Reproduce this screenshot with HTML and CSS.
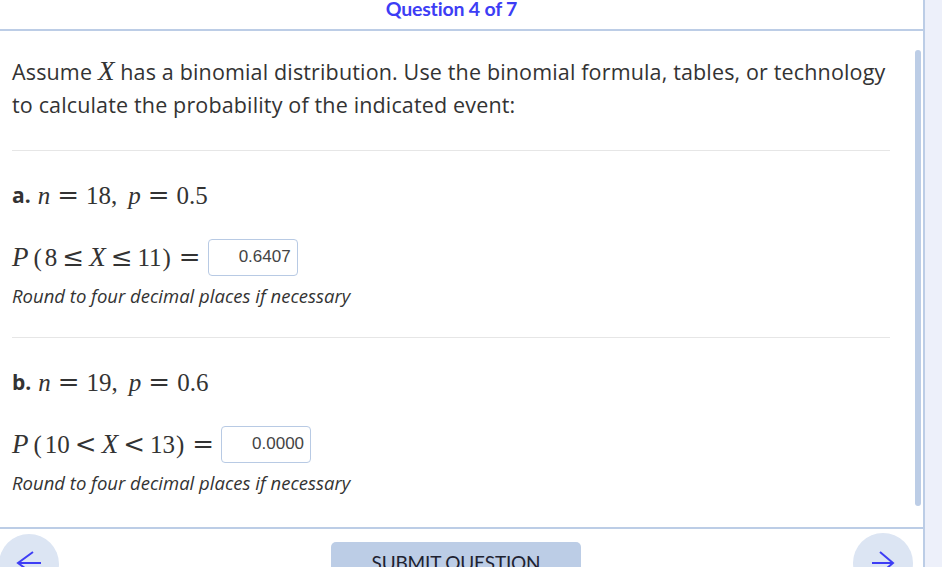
FILE: index.html
```html
<!DOCTYPE html>
<html>
<head>
<meta charset="utf-8">
<link rel="stylesheet" href="styles.css">
</head>
<body>
<div class="app">
  <div class="main">
    <div class="header">Question 4 of 7</div>
    <div class="scroll">
      <div class="content">
        <p class="intro">Assume <span class="mv">X</span> has a binomial distribution. Use the binomial formula, tables, or technology to calculate the probability of the indicated event:</p>

        <div class="part">
          <div class="given"><span class="label">a.</span><span class="m"><i>n</i><span class="rel">=</span>18<span class="comma">,</span><i>p</i><span class="rel">=</span>0.5</span></div>
          <div class="eq"><span class="m"><i class="bigP">P</i><span class="paren">(</span>8<span class="rel">≤</span><i class="bigX">X</i><span class="rel">≤</span>11<span class="paren">)</span><span class="rel last">=</span></span><span class="answer">0.6407</span></div>
          <div class="hint">Round to four decimal places if necessary</div>
        </div>

        <div class="part">
          <div class="given"><span class="label">b.</span><span class="m"><i>n</i><span class="rel">=</span>19<span class="comma">,</span><i>p</i><span class="rel">=</span>0.6</span></div>
          <div class="eq"><span class="m"><i class="bigP">P</i><span class="paren">(</span>10<span class="rel">&lt;</span><i class="bigX">X</i><span class="rel">&lt;</span>13<span class="paren">)</span><span class="rel last">=</span></span><span class="answer">0.0000</span></div>
          <div class="hint">Round to four decimal places if necessary</div>
        </div>
      </div>
      <div class="thumb"></div>
    </div>
    <div class="footer">
      <div class="circle prev">
        <svg width="60" height="60" viewBox="0 0 60 60"><path d="M42 29 H19 M34 18 L19 29 L34 40" fill="none" stroke="#3d3df5" stroke-width="2"/></svg>
      </div>
      <div class="submit">SUBMIT QUESTION</div>
      <div class="circle next">
        <svg width="60" height="60" viewBox="0 0 60 60"><path d="M19 30 H40 M27 19 L40 30 L27 41" fill="none" stroke="#3d3df5" stroke-width="2"/></svg>
      </div>
    </div>
  </div>
  <div class="side"></div>
</div>
</body>
</html>
```
FILE: styles.css
```css
html, body {
  margin: 0;
  padding: 0;
  overflow: hidden;
  background: #fff;
}
body {
  font-family: "Open Sans", "Noto Sans", sans-serif;
  color: #333;
}
.app {
  display: flex;
  height: 567px;
}
.main {
  width: 923px;
  border-right: 2px solid #bccde6;
  display: flex;
  flex-direction: column;
  overflow: hidden;
}
.side {
  flex: 1;
  background: #edf0fa;
}
.header {
  height: 29px;
  flex-shrink: 0;
  border-bottom: 2px solid #bccde6;
  text-align: center;
  padding-right: 20px;
  font-family: Lato, sans-serif;
  font-weight: 700;
  font-size: 19.5px;
  line-height: 17px;
  letter-spacing: -0.2px;
  color: #3d3df5;
}
.scroll {
  height: 496px;
  flex-shrink: 0;
  display: flex;
}
.content {
  width: 878px;
  padding-left: 12px;
}
.thumb {
  width: 6px;
  margin: 19px 0 21px 25px;
  background: #bccde6;
  border-radius: 3px;
}
.intro {
  margin: 0 0 29px 0;
  padding-top: 24px;
  font-size: 21.5px;
  letter-spacing: 0.15px;
  line-height: 33px;
}
.mv {
  font-family: "Liberation Serif", serif;
  font-style: italic;
  font-size: 27px;
  line-height: 20px;
}
.part {
  border-top: 1px solid #e6e6e6;
  padding-top: 29px;
  padding-bottom: 29px;
}
.given {
  height: 30px;
  display: flex;
  align-items: center;
}
.label {
  font-weight: 700;
  font-size: 21px;
  margin-right: 7px;
}
.m {
  font-family: "Liberation Serif", serif;
  font-size: 25px;
  white-space: nowrap;
}
.m i {
  font-style: italic;
}
.rel {
  font-family: "DejaVu Serif", serif;
  font-size: 26px;
  margin: 0 5px;
}
.given .rel {
  margin: 0 7px;
}
.rel.last {
  margin-right: 0;
}
.comma {
  margin-right: 11px;
}
.bigP, .bigX {
  font-size: 27px;
}
.bigP {
  margin-right: 4px;
}
.paren {
  margin: 0 3px 0 1px;
}
.eq {
  margin-top: 29px;
  height: 37px;
  display: flex;
  align-items: center;
}
.answer {
  box-sizing: border-box;
  width: 90px;
  height: 37px;
  margin-left: 7px;
  border: 1.5px solid #b8cae4;
  border-radius: 4px;
  font-family: "Liberation Sans", Arial, sans-serif;
  font-size: 17px;
  color: #444;
  text-align: right;
  padding-right: 6px;
  line-height: 34px;
}
.hint {
  margin-top: 8px;
  font-style: italic;
  font-size: 18.5px;
  line-height: 24px;
}
.footer {
  flex: 1;
  border-top: 2px solid #bccde6;
  display: flex;
  justify-content: space-between;
  align-items: flex-start;
  overflow: hidden;
}
.circle {
  width: 60px;
  height: 60px;
  flex-shrink: 0;
  border-radius: 50%;
  background: #dce5f3;
}
.circle svg {
  display: block;
}
.prev {
  margin-top: 5px;
  margin-left: -1px;
}
.next {
  margin-top: 4px;
  margin-right: 10px;
}
.submit {
  width: 250px;
  height: 40px;
  flex-shrink: 0;
  margin-top: 13px;
  box-sizing: border-box;
  padding-top: 11px;
  background: #bccde6;
  border-radius: 5px;
  text-align: center;
  font-family: Lato, sans-serif;
  font-size: 19px;
  line-height: 19px;
  letter-spacing: -0.2px;
  color: #1e2230;
}
```
